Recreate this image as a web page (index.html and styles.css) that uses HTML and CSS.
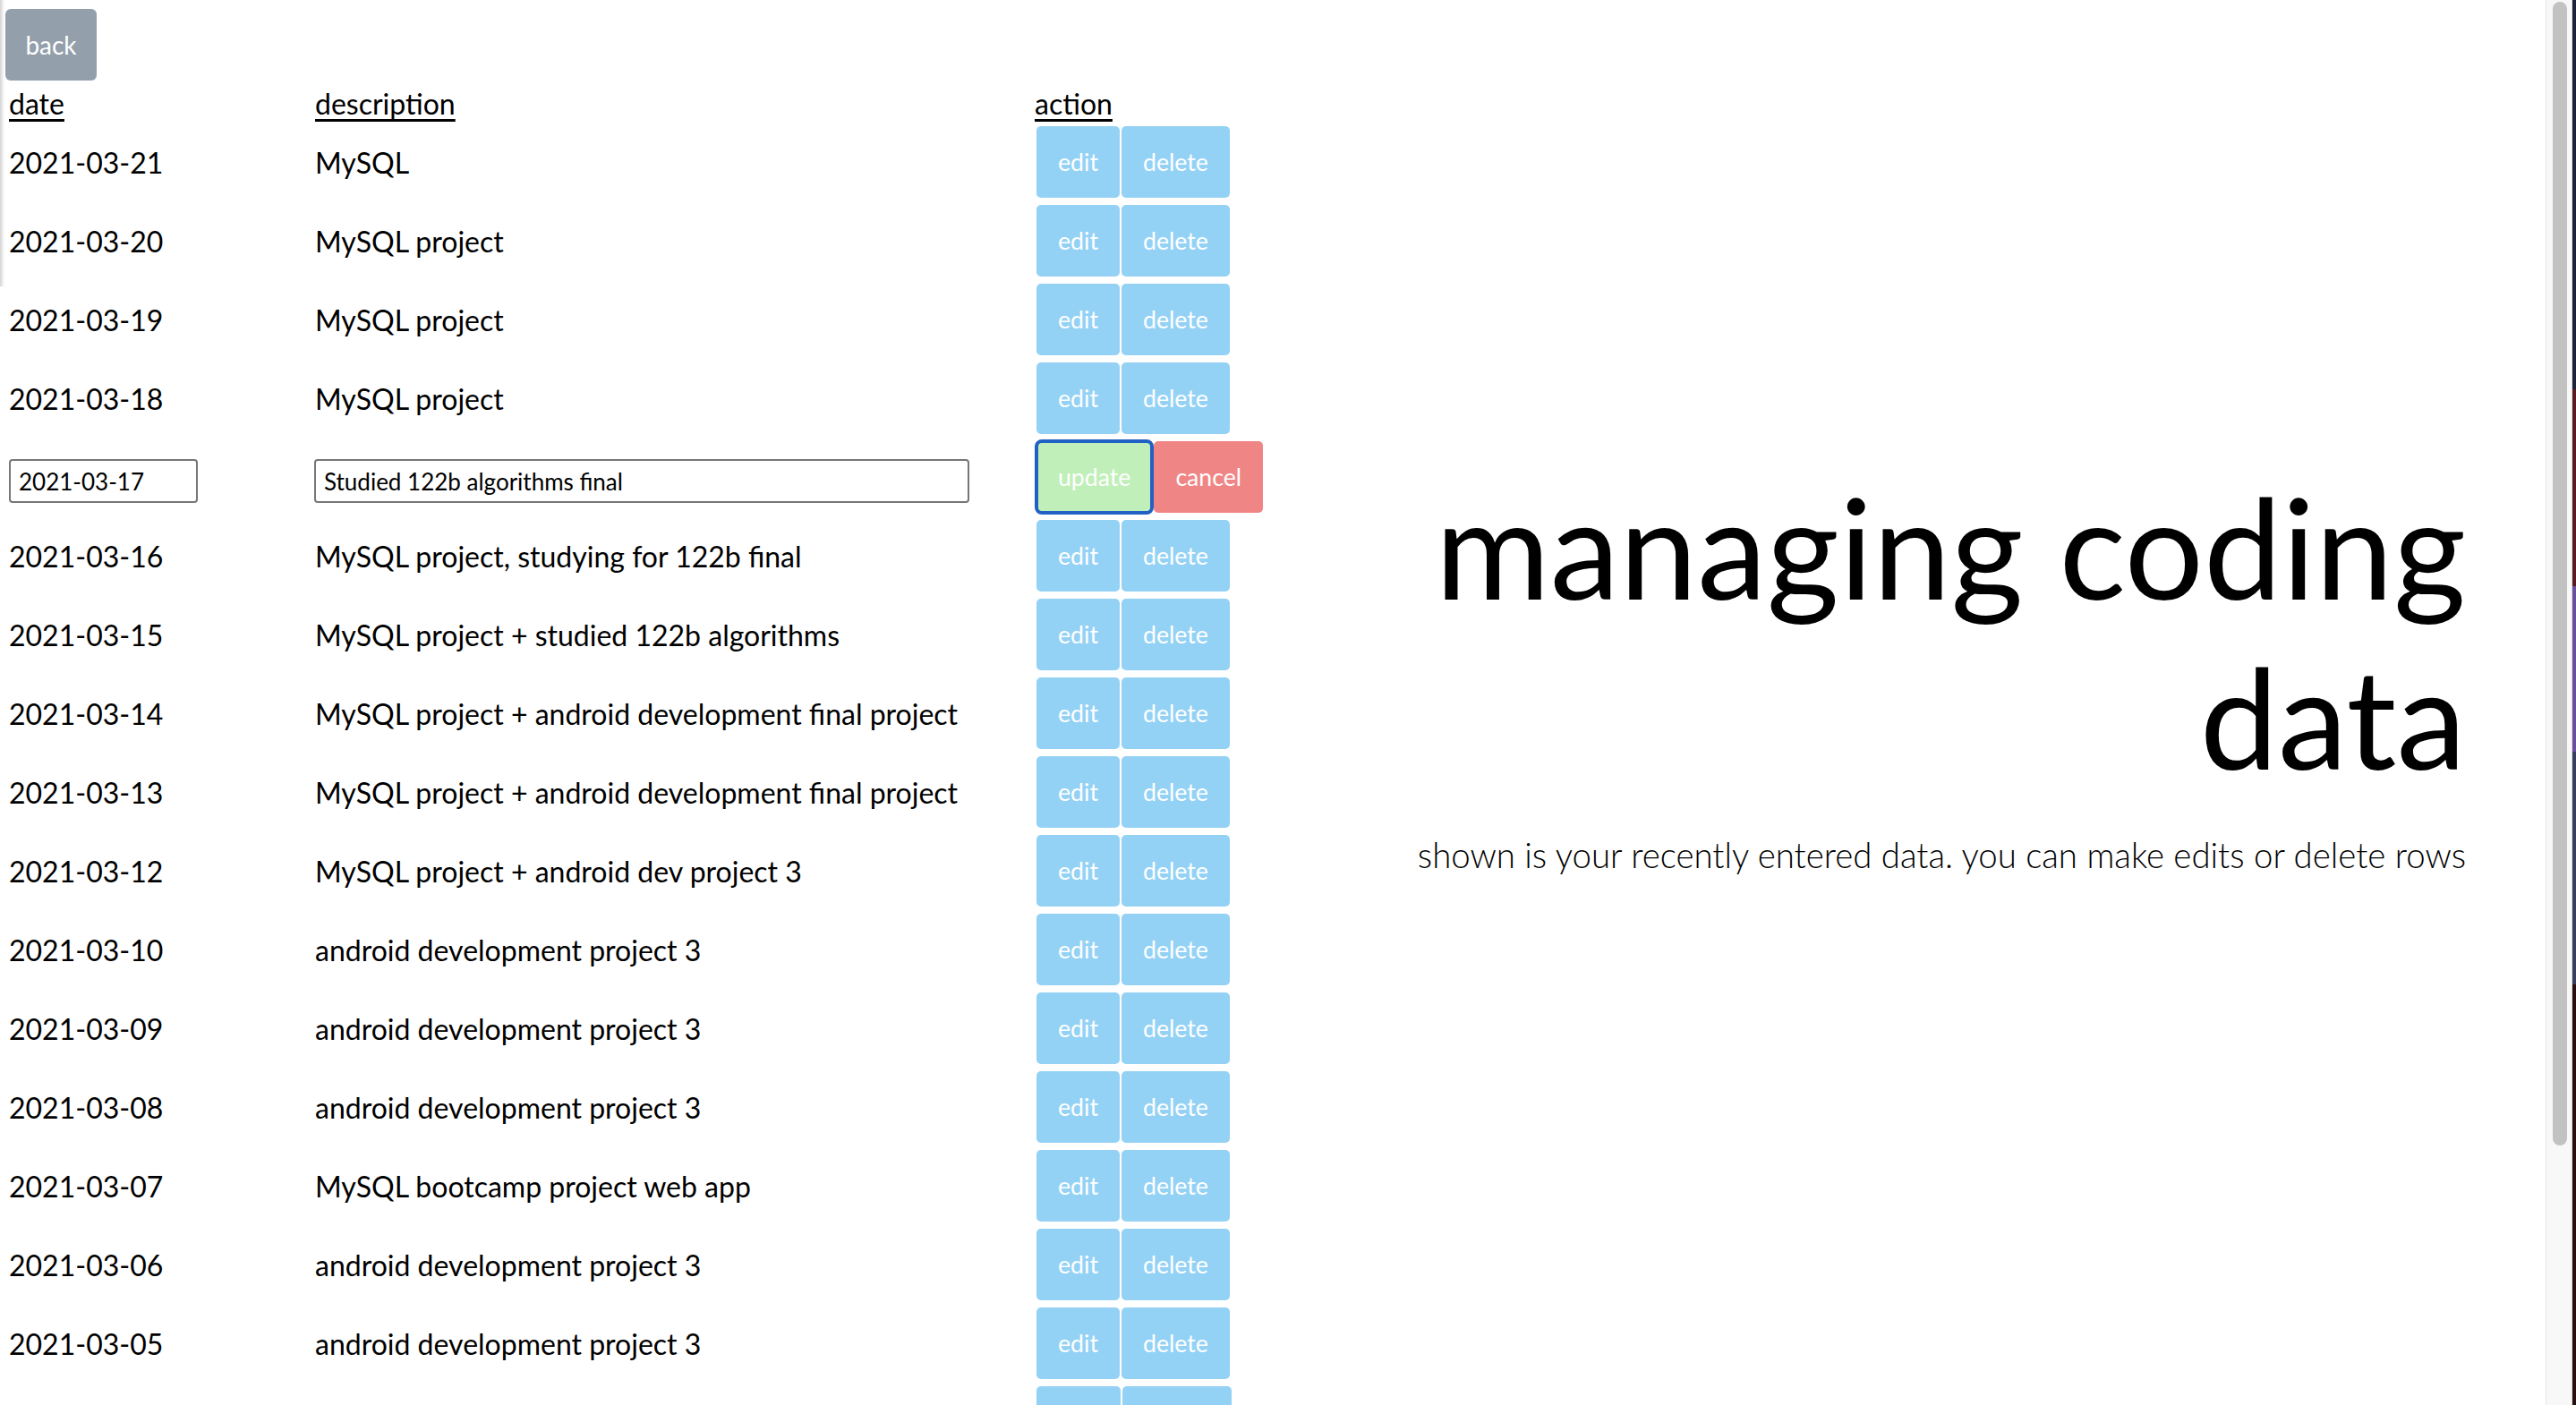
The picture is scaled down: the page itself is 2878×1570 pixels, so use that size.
FILE: index.html
```html
<!DOCTYPE html>
<html lang="en">
<head>
<meta charset="utf-8">
<title>managing coding data</title>
<link rel="stylesheet" href="styles.css">
</head>
<body>
<div class="window">
  <div class="page">
    <button class="back-btn">back</button>
    <div class="main">
      <table class="data-table">
        <thead>
          <tr>
            <th class="col-date"><span class="th-label">date</span></th>
            <th class="col-desc"><span class="th-label">description</span></th>
            <th class="col-action"><span class="th-label">action</span></th>
          </tr>
        </thead>
        <tbody>
          <tr><td>2021-03-21</td><td>MySQL</td><td><div class="actions"><button class="btn btn-edit">edit</button><button class="btn btn-delete">delete</button></div></td></tr>
          <tr><td>2021-03-20</td><td>MySQL project</td><td><div class="actions"><button class="btn btn-edit">edit</button><button class="btn btn-delete">delete</button></div></td></tr>
          <tr><td>2021-03-19</td><td>MySQL project</td><td><div class="actions"><button class="btn btn-edit">edit</button><button class="btn btn-delete">delete</button></div></td></tr>
          <tr><td>2021-03-18</td><td>MySQL project</td><td><div class="actions"><button class="btn btn-edit">edit</button><button class="btn btn-delete">delete</button></div></td></tr>
          <tr class="editing">
            <td><input class="field field-date" type="text" value="2021-03-17"></td>
            <td><input class="field field-desc" type="text" value="Studied 122b algorithms final"></td>
            <td><div class="actions"><button class="btn btn-update">update</button><button class="btn btn-cancel">cancel</button></div></td>
          </tr>
          <tr><td>2021-03-16</td><td>MySQL project, studying for 122b final</td><td><div class="actions"><button class="btn btn-edit">edit</button><button class="btn btn-delete">delete</button></div></td></tr>
          <tr><td>2021-03-15</td><td>MySQL project + studied 122b algorithms</td><td><div class="actions"><button class="btn btn-edit">edit</button><button class="btn btn-delete">delete</button></div></td></tr>
          <tr><td>2021-03-14</td><td>MySQL project + android development final project</td><td><div class="actions"><button class="btn btn-edit">edit</button><button class="btn btn-delete">delete</button></div></td></tr>
          <tr><td>2021-03-13</td><td>MySQL project + android development final project</td><td><div class="actions"><button class="btn btn-edit">edit</button><button class="btn btn-delete">delete</button></div></td></tr>
          <tr><td>2021-03-12</td><td>MySQL project + android dev project 3</td><td><div class="actions"><button class="btn btn-edit">edit</button><button class="btn btn-delete">delete</button></div></td></tr>
          <tr><td>2021-03-10</td><td>android development project 3</td><td><div class="actions"><button class="btn btn-edit">edit</button><button class="btn btn-delete">delete</button></div></td></tr>
          <tr><td>2021-03-09</td><td>android development project 3</td><td><div class="actions"><button class="btn btn-edit">edit</button><button class="btn btn-delete">delete</button></div></td></tr>
          <tr><td>2021-03-08</td><td>android development project 3</td><td><div class="actions"><button class="btn btn-edit">edit</button><button class="btn btn-delete">delete</button></div></td></tr>
          <tr><td>2021-03-07</td><td>MySQL bootcamp project web app</td><td><div class="actions"><button class="btn btn-edit">edit</button><button class="btn btn-delete">delete</button></div></td></tr>
          <tr><td>2021-03-06</td><td>android development project 3</td><td><div class="actions"><button class="btn btn-edit">edit</button><button class="btn btn-delete">delete</button></div></td></tr>
          <tr><td>2021-03-05</td><td>android development project 3</td><td><div class="actions"><button class="btn btn-edit">edit</button><button class="btn btn-delete">delete</button></div></td></tr>
          <tr class="row-partial"><td></td><td></td><td><div class="actions"><button class="btn btn-edit" aria-label="edit"></button><button class="btn btn-delete" aria-label="delete"></button></div></td></tr>
        </tbody>
      </table>
      <section class="hero">
        <h1 class="hero-title">managing coding data</h1>
        <p class="hero-sub">shown is your recently entered data. you can make edits or delete rows</p>
      </section>
    </div>
  </div>
  <div class="scrollbar"><div class="scroll-thumb"></div></div>
  <div class="desk-edge"></div>
</div>
</body>
</html>
```

FILE: styles.css
```css
html, body {
  margin: 0;
  padding: 0;
  background: #ffffff;
}

body {
  font-family: Lato, "Noto Sans", sans-serif;
  color: #000000;
  font-size: 32px;
}

.window {
  display: flex;
  width: 2878px;
  height: 1570px;
  overflow: hidden;
}

.page {
  position: relative;
  flex: 1;
  display: flex;
  flex-direction: column;
  align-items: flex-start;
  padding-left: 4px;
  overflow: hidden;
  background: #ffffff;
}

.page::before {
  content: "";
  position: absolute;
  left: 0;
  top: 0;
  width: 5px;
  height: 320px;
  background: linear-gradient(to right, #d4d4d4, rgba(230, 230, 230, 0));
}

.back-btn {
  flex: none;
  margin: 10px 0 0 2px;
  width: 102px;
  height: 80px;
  border: none;
  border-radius: 6px;
  background: #949fac;
  color: #ffffff;
  font-family: Lato, "Noto Sans", sans-serif;
  font-size: 28px;
  padding: 0;
}

.main {
  flex: none;
  display: flex;
  align-items: flex-start;
  width: 100%;
}

.data-table {
  flex: none;
  border-collapse: separate;
  border-spacing: 4px;
  font-size: 32px;
}

.data-table th,
.data-table td {
  padding: 2px;
  text-align: left;
  vertical-align: middle;
  font-weight: 400;
  white-space: nowrap;
}

.data-table th {
  padding-bottom: 0;
}

.col-date { width: 334px; }
.col-desc { width: 796px; }
.col-action { width: 262px; }

.th-label {
  text-decoration: underline;
  text-decoration-thickness: 3px;
  text-underline-offset: 5px;
}

.actions {
  display: flex;
  gap: 2px;
  padding-left: 2px;
}

.btn {
  height: 80px;
  padding: 0 24px;
  border: none;
  border-radius: 5px;
  color: #ffffff;
  font-family: Lato, "Noto Sans", sans-serif;
  font-size: 26.67px;
  line-height: 1;
}

.btn-edit,
.btn-delete {
  background: #94d2f5;
}

.row-partial .btn-edit { width: 94px; }
.row-partial .btn-delete { width: 122px; }

.btn-update {
  background: #c0efb9;
  outline: 4px solid #2160c4;
  outline-offset: -2px;
  border-radius: 6px;
}

.btn-cancel {
  background: #f08585;
}

.field {
  box-sizing: border-box;
  height: 49px;
  margin-top: 9px;
  border: 2px solid #767676;
  border-radius: 4px;
  padding: 0 9px;
  font-family: Lato, "Noto Sans", sans-serif;
  font-size: 26px;
  color: #000000;
  background: #ffffff;
  vertical-align: middle;
}

.field-date { width: 211px; margin-left: 0; }
.field-desc { width: 732px; margin-left: -1px; }

.hero {
  flex: 1;
  padding: 425px 89px 0 0;
  text-align: right;
}

.hero-title {
  margin: 0;
  font-size: 156px;
  font-weight: 400;
  line-height: 190px;
}

.hero-sub {
  margin: 37px 0 0 0;
  font-size: 38.4px;
  font-weight: 300;
  line-height: 1.2;
}

.scrollbar {
  flex: none;
  box-sizing: border-box;
  width: 30px;
  height: 1570px;
  background: #f8f8f8;
  border-left: 1px solid #e6e6e6;
  border-right: 1px solid #dcdcdc;
  padding: 2px 0 0 7px;
}

.scroll-thumb {
  width: 16px;
  height: 1278px;
  border-radius: 8px;
  background: #c2c2c2;
}

.desk-edge {
  flex: none;
  width: 4px;
  height: 1570px;
  background: linear-gradient(to bottom,
    #1b2138 0, #1b2138 435px,
    #5b1a1f 435px, #5b1a1f 655px,
    #6a4f9c 655px, #6a4f9c 840px,
    #34405c 840px, #34405c 1100px,
    #2a0f12 1100px, #2a0f12 1570px);
}
```
